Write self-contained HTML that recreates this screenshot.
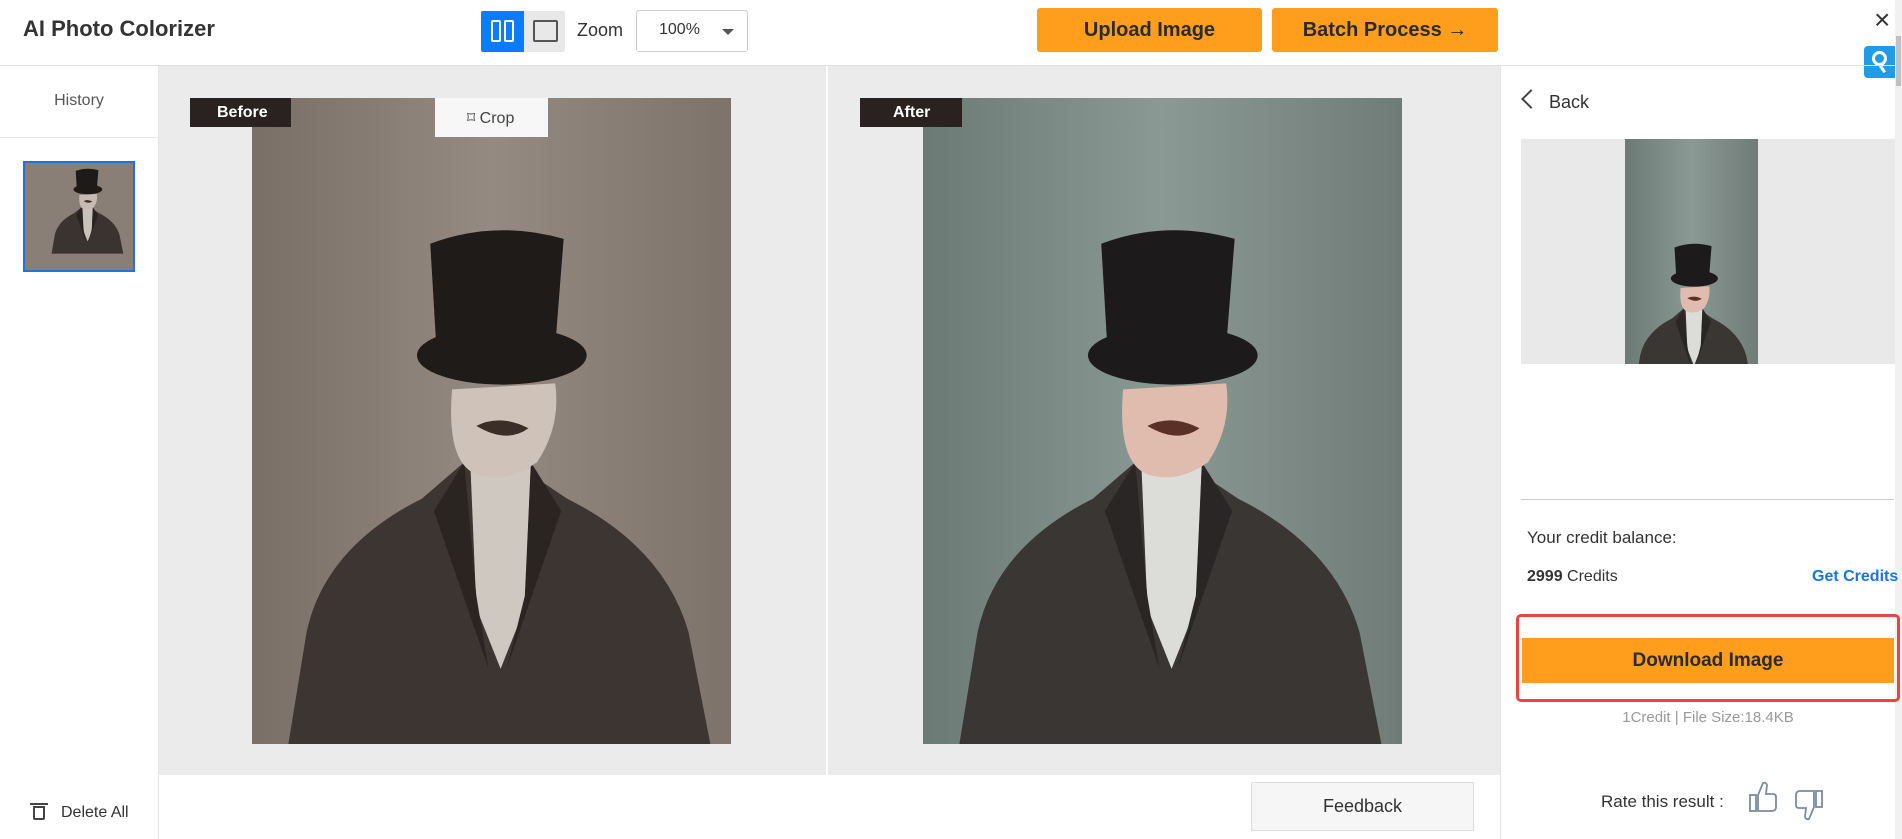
<!DOCTYPE html>
<html><head><meta charset="utf-8"><style>
*{box-sizing:border-box;margin:0;padding:0}
body{width:1902px;height:839px;overflow:hidden;background:#fff;font-family:"Liberation Sans",Arial,sans-serif;position:relative;color:#333}
.a{position:absolute}
.btn{background:#ff9d1c;border-radius:3px;color:#2b2b2b;font-weight:bold;font-size:20px;display:flex;align-items:center;justify-content:center}
</style></head><body>
<svg width="0" height="0" style="position:absolute">
<defs>
<symbol id="man" viewBox="0 0 395 532">
<path d="M30 532 L45 440 Q60 370 140 330 L175 300 L215 300 L260 330 Q340 370 360 440 L378 532Z" fill="var(--coat)"/>
<path d="M180 300 L230 300 L225 420 L205 470 L185 420Z" fill="var(--shirt)"/>
<path d="M175 300 L150 340 L195 470 L185 410Z M230 300 L255 340 L210 470 L225 410Z" fill="var(--lapel)"/>
<path d="M165 240 Q160 300 185 310 Q210 318 235 300 Q255 270 250 235 Z" fill="var(--face)"/>
<path d="M185 270 Q205 260 228 272 Q210 285 185 270Z" fill="var(--must)"/>
<path d="M147 120 Q200 100 257 116 L250 205 Q200 215 152 205 Z" fill="var(--hat)"/>
<ellipse cx="206" cy="212" rx="70" ry="24" fill="var(--hat)"/>
</symbol>
</defs></svg>

<div class="a" style="left:23px;top:16px;font-size:22px;font-weight:bold;color:#333">AI Photo Colorizer</div>
<div class="a" style="left:481px;top:11px;width:84px;height:41px;background:#e8e8e8;border-radius:2px"></div>
<div class="a" style="left:481px;top:11px;width:43px;height:41px;background:#0b7bff;border-radius:2px 0 0 2px"></div>
<div class="a" style="left:491px;top:20px;width:10px;height:22px;border:2.5px solid #fff;border-radius:2px"></div>
<div class="a" style="left:504px;top:20px;width:10px;height:22px;border:2.5px solid #fff;border-radius:2px"></div>
<div class="a" style="left:533px;top:20px;width:25px;height:22px;border:2.5px solid #555;border-radius:2px"></div>
<div class="a" style="left:577px;top:20px;font-size:18px;color:#333">Zoom</div>
<div class="a" style="left:636px;top:10px;width:112px;height:42px;border:1px solid #ccc;border-radius:3px;font-size:16px;padding:10px 0 0 22px">100%</div>
<div class="a" style="left:722px;top:29px;border-left:6px solid transparent;border-right:6px solid transparent;border-top:6px solid #555"></div>
<div class="a btn" style="left:1037px;top:8px;width:225px;height:44px">Upload Image</div>
<div class="a btn" style="left:1272px;top:8px;width:226px;height:44px">Batch Process →</div>
<div class="a" style="left:1874px;top:4px;font-size:28px;color:#333">×</div>
<div class="a" style="left:1864px;top:46px;width:31px;height:32px;background:#1e9be9;border-radius:4px 0 0 4px"></div>
<div class="a" style="left:1872px;top:51px;width:15px;height:15px;border:3px solid #fff;border-radius:50%"></div>
<div class="a" style="left:1881px;top:65px;width:3px;height:8px;background:#fff;transform:rotate(-35deg)"></div>
<div class="a" style="left:1895px;top:0;width:7px;height:839px;background:#f1f1f1"></div>
<div class="a" style="left:1896px;top:36px;width:5px;height:50px;background:#c1c1c1"></div>
<div class="a" style="left:0;top:65px;width:1895px;height:1px;background:#e2e2e2"></div>

<div class="a" style="left:158px;top:66px;width:1px;height:773px;background:#e6e6e6"></div>
<div class="a" style="left:0;top:92px;width:158px;text-align:center;font-size:16px;color:#555">History</div>
<div class="a" style="left:0;top:137px;width:158px;height:1px;background:#e6e6e6"></div>
<div class="a" style="left:23px;top:161px;width:112px;height:111px;border:2px solid #1f73e0;background:#8a7f77;overflow:hidden">
<svg width="108" height="107" viewBox="-30 70 455 462" preserveAspectRatio="none" style="--coat:#3a3330;--shirt:#c9c2bb;--lapel:#2a2421;--face:#c7bbb1;--must:#3a2e29;--hat:#1e1a18"><use href="#man"/></svg></div>
<div class="a" style="left:33px;top:806px;width:12px;height:14px;border:2px solid #444;border-radius:0 0 2px 2px"></div>
<div class="a" style="left:30px;top:803px;width:18px;height:2px;background:#444"></div>
<div class="a" style="left:61px;top:804px;font-size:16px;color:#333">Delete All</div>

<div class="a" style="left:159px;top:66px;width:1341px;height:709px;background:#ebebeb"></div>
<div class="a" style="left:826px;top:66px;width:2px;height:709px;background:#fff"></div>
<div class="a" style="left:252px;top:98px;width:479px;height:646px;background:linear-gradient(90deg,#7a6f67,#958a82 50%,#7d736b);overflow:hidden">
<svg width="479" height="646" viewBox="0 0 395 532" preserveAspectRatio="none" style="--coat:#3d3532;--shirt:#cfc8c1;--lapel:#2b2522;--face:#cfc3b9;--must:#3b2d28;--hat:#1f1b19"><use href="#man"/></svg></div>
<div class="a" style="left:190px;top:98px;width:101px;height:29px;background:#2a2220;color:#fff;font-size:16px;font-weight:bold;padding:6px 0 0 27px">Before</div>
<div class="a" style="left:435px;top:98px;width:113px;height:39px;background:#f7f7f7;font-size:16px;color:#444;padding:10px 0 0 32px">⌑ Crop</div>
<div class="a" style="left:923px;top:98px;width:479px;height:646px;background:linear-gradient(90deg,#6c7a76,#8b9995 50%,#6f7c78);overflow:hidden">
<svg width="479" height="646" viewBox="0 0 395 532" preserveAspectRatio="none" style="--coat:#3a3634;--shirt:#dcdcd8;--lapel:#2a2625;--face:#e0bcae;--must:#5a3126;--hat:#1c1a1a"><use href="#man"/></svg></div>
<div class="a" style="left:860px;top:98px;width:102px;height:29px;background:#2a2220;color:#fff;font-size:16px;font-weight:bold;padding:6px 0 0 33px">After</div>
<div class="a" style="left:1251px;top:782px;width:223px;height:49px;background:#f6f6f6;border:1px solid #ddd;font-size:18px;display:flex;align-items:center;justify-content:center;color:#333">Feedback</div>

<div class="a" style="left:1500px;top:66px;width:1px;height:773px;background:#e6e6e6"></div>
<div class="a" style="left:1524px;top:92px;width:14px;height:14px;border-left:2px solid #444;border-bottom:2px solid #444;transform:rotate(45deg)"></div>
<div class="a" style="left:1549px;top:92px;font-size:18px;color:#333">Back</div>
<div class="a" style="left:1521px;top:139px;width:374px;height:225px;background:#e9e9e9"></div>
<div class="a" style="left:1625px;top:139px;width:133px;height:225px;background:linear-gradient(90deg,#6c7a76,#8b9995 50%,#6f7c78);overflow:hidden">
<svg width="133" height="225" viewBox="0 -134 395 666" preserveAspectRatio="none" style="--coat:#3a3634;--shirt:#dcdcd8;--lapel:#2a2625;--face:#e0bcae;--must:#5a3126;--hat:#1c1a1a"><use href="#man"/></svg></div>
<div class="a" style="left:1521px;top:499px;width:373px;height:1px;background:#ccc"></div>
<div class="a" style="left:1527px;top:528px;font-size:17px;color:#333">Your credit balance:</div>
<div class="a" style="left:1527px;top:568px;font-size:16px;color:#333"><b>2999</b> Credits</div>
<div class="a" style="left:1812px;top:568px;font-size:16px;color:#1a73e8;font-weight:bold">Get Credits</div>
<div class="a" style="left:1516px;top:614px;width:384px;height:88px;border:3px solid #e84545;border-radius:5px"></div>
<div class="a btn" style="left:1522px;top:638px;width:372px;height:45px;border-radius:0;font-size:19px">Download Image</div>
<div class="a" style="left:1522px;top:709px;width:372px;text-align:center;font-size:15px;color:#999">1Credit | File Size:18.4KB</div>
<div class="a" style="left:1601px;top:792px;font-size:17px;color:#333">Rate this result :</div>
<svg class="a" style="left:1748px;top:781px" width="76" height="40" viewBox="0 0 76 40" fill="none" stroke="#7b8ba3" stroke-width="1.8">
<rect x="2" y="14" width="6" height="16"/><path d="M10 30 H24 Q28 30 28 26 V16 Q28 13 25 13 H18 L19 4 Q18 1 15 2 L10 14Z"/>
<rect x="68" y="10" width="6" height="16"/><path d="M66 10 H52 Q48 10 48 14 V24 Q48 27 51 27 H58 L57 36 Q58 39 61 38 L66 26Z"/>
</svg>
</body></html>
